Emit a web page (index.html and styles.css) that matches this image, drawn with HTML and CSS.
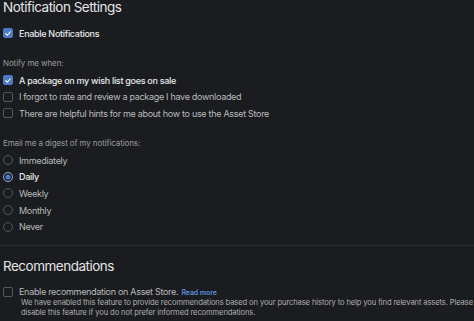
FILE: index.html
```html
<!DOCTYPE html>
<html>
<head>
<meta charset="utf-8">
<link rel="stylesheet" href="styles.css">
</head>
<body>
<div class="page">
  <h1 class="title">Notification Settings</h1>
  <label class="row row-main">
    <span class="cb checked"><svg viewBox="0 0 10 10"><path d="M2.2 5.2 L4.2 7.2 L7.9 2.8" /></svg></span>
    <span class="lbl strong">Enable Notifications</span>
  </label>

  <div class="caption">Notify me when:</div>
  <label class="row">
    <span class="cb checked"><svg viewBox="0 0 10 10"><path d="M2.2 5.2 L4.2 7.2 L7.9 2.8" /></svg></span>
    <span class="lbl strong">A package on my wish list goes on sale</span>
  </label>
  <label class="row">
    <span class="cb"></span>
    <span class="lbl">I forgot to rate and review a package I have downloaded</span>
  </label>
  <label class="row">
    <span class="cb"></span>
    <span class="lbl">There are helpful hints for me about how to use the Asset Store</span>
  </label>

  <div class="caption">Email me a digest of my notifications:</div>
  <div class="radios">
    <label class="row"><span class="rd"></span><span class="lbl">Immediately</span></label>
    <label class="row"><span class="rd on"></span><span class="lbl strong">Daily</span></label>
    <label class="row"><span class="rd"></span><span class="lbl">Weekly</span></label>
    <label class="row"><span class="rd"></span><span class="lbl">Monthly</span></label>
    <label class="row"><span class="rd"></span><span class="lbl">Never</span></label>
  </div>

  <hr class="divider">

  <h2 class="title2">Recommendations</h2>
  <div class="rec">
    <label class="row">
      <span class="cb"></span>
      <span class="lbl">Enable recommendation on Asset Store. <a class="more">Read more</a></span>
    </label>
    <p class="desc">We have enabled this feature to provide recommendations based on your purchase history to help you find relevant assets. Please disable this feature if you do not prefer informed recommendations.</p>
  </div>
</div>
</body>
</html>
```
FILE: styles.css
```css
html, body {
  margin: 0;
  padding: 0;
  background: #1b1c1f;
}
.page {
  font-family: Inter, "Noto Sans", sans-serif;
  color: #c9cacc;
  padding: 0 0 0 3px;
  width: 471px;
  overflow: hidden;
  height: 321px;
}
.title {
  margin: -1px 0 0 0;
  font-size: 13.5px;
  font-weight: 400;
  line-height: 16px;
  letter-spacing: -0.5px;
  color: #e4e5e7;
}
.title2 {
  margin: 11px 0 0 0;
  font-size: 13.5px;
  font-weight: 400;
  line-height: 18px;
  letter-spacing: -0.5px;
  color: #e4e5e7;
}
.row {
  display: flex;
  align-items: center;
  gap: 6px;
  height: 16.7px;
  font-size: 9px;
  letter-spacing: -0.3px;
}
.row-main {
  margin-top: 10px;
}
.lbl {
  color: #b9babd;
  white-space: nowrap;
}
.lbl.strong {
  color: #e8e9eb;
  font-weight: 500;
}
.cb {
  width: 8px;
  height: 8px;
  border: 1px solid #55575c;
  border-radius: 2px;
  flex: none;
  display: flex;
  align-items: center;
  justify-content: center;
}
.cb svg {
  display: none;
  width: 9px;
  height: 9px;
}
.cb.checked {
  background: #4c7ac4;
  border-color: #4c7ac4;
}
.cb.checked svg {
  display: block;
}
.cb svg path {
  fill: none;
  stroke: #ffffff;
  stroke-width: 1.4;
  stroke-linecap: round;
  stroke-linejoin: round;
}
.rd {
  width: 8px;
  height: 8px;
  border: 1px solid #55575c;
  border-radius: 50%;
  flex: none;
}
.rd.on {
  border-color: #8aa6d6;
  background: #4c7ac4;
  box-shadow: inset 0 0 0 1.5px #1b1c1f;
}
.caption {
  font-size: 8px;
  color: #9a9b9f;
  line-height: 10px;
  letter-spacing: -0.1px;
  margin: 16px 0 4px 0;
}
.divider {
  border: 0;
  border-top: 1px solid #2b2c30;
  margin: 10px 0 0 -3px;
  width: 474px;
}
.rec {
  margin-top: 8px;
}
.more {
  color: #5d8fdc;
  font-size: 7px;
  font-weight: 600;
  letter-spacing: -0.1px;
  margin-left: 1px;
}
.desc {
  margin: -2px 0 0 18px;
  font-size: 7.6px;
  line-height: 10px;
  letter-spacing: -0.12px;
  color: #aeafb2;
  width: 460px;
}
```
